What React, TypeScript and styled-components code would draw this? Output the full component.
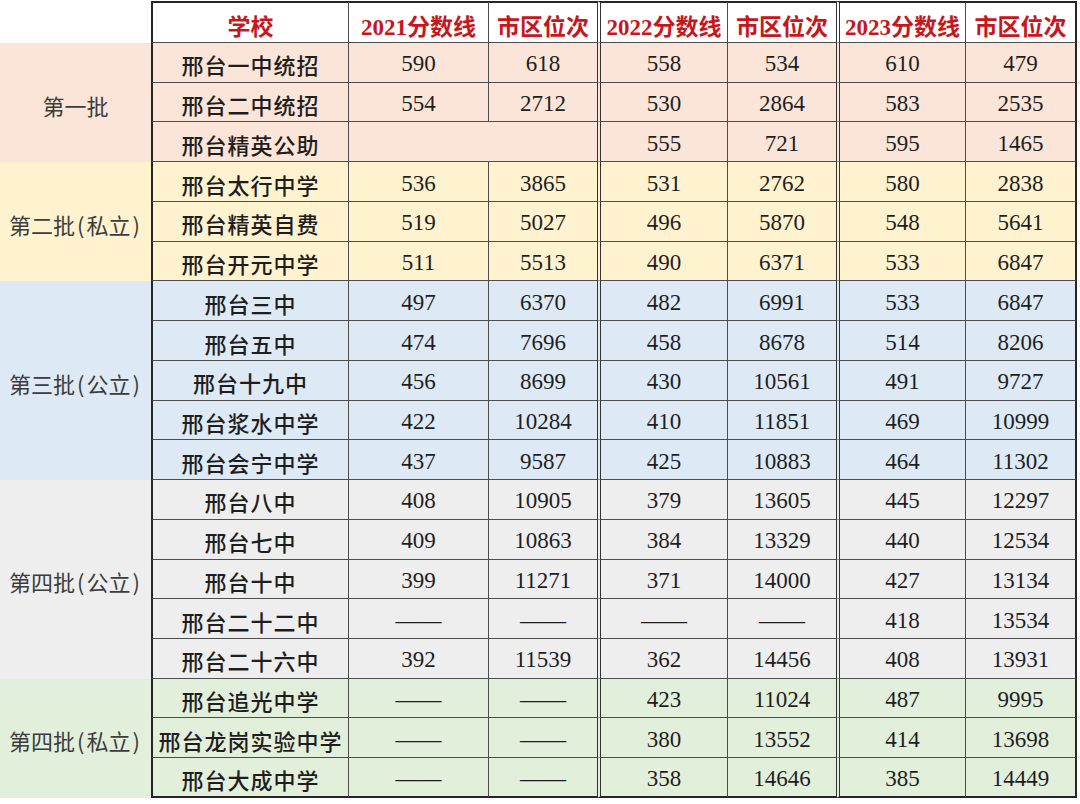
import React from "react";
import styled, { createGlobalStyle } from "styled-components";

const GlobalStyle = createGlobalStyle`
  html, body {
    margin: 0;
    padding: 0;
    background: #ffffff;
  }
  body {
    width: 1080px;
    height: 804px;
    overflow: hidden;
  }
`;

const Page = styled.div`
  width: 1080px;
  height: 804px;
  padding-top: 1px;
  box-sizing: border-box;
  background: #ffffff;
`;

const Sheet = styled.div`
  display: grid;
  grid-template-columns: 151px 198px 140px 108px 131px 108px 130px 111px;
  grid-template-rows: 42px repeat(19, 39.74px);
`;

const FRAME = "2px solid #262626";
const LINE = "1px solid #4d4d4d";
const DOUBLE = "4px double #333333";

const leftDouble = [3, 5];
const rightLine = [0, 1, 3, 5];

const Cell = styled.div<{
  $col: number;
  $span?: number;
  $bg: string;
  $lastRow?: boolean;
  $header?: boolean;
  $kind?: "name" | "num" | "head";
}>`
  grid-column: span ${(p) => p.$span ?? 1};
  display: flex;
  align-items: center;
  justify-content: center;
  box-sizing: border-box;
  padding-top: 4px;
  background: ${(p) => p.$bg};
  border-top: ${(p) => (p.$header ? FRAME : "none")};
  border-bottom: ${(p) => (p.$lastRow ? FRAME : LINE)};
  border-left: ${(p) =>
    p.$col === 0 ? FRAME : leftDouble.includes(p.$col) ? DOUBLE : "none"};
  border-right: ${(p) => {
    const end = p.$col + (p.$span ?? 1) - 1;
    if (end === 6) return FRAME;
    return rightLine.includes(end) ? LINE : "none";
  }};
  white-space: nowrap;
  font-size: ${(p) => (p.$kind === "num" ? "23px" : p.$kind === "head" ? "23px" : "22px")};
  color: ${(p) => (p.$kind === "head" ? "#c8161d" : "#1e1e1e")};
  font-weight: ${(p) =>
    p.$kind === "head" ? 700 : p.$kind === "name" ? 500 : 400};
  letter-spacing: ${(p) => (p.$kind === "name" ? "1px" : "0")};
  font-family: ${(p) =>
    p.$kind === "name"
      ? `"Noto Sans CJK SC", sans-serif`
      : `"Liberation Serif", "Noto Sans CJK SC", serif`};
`;

const Corner = styled.div`
  grid-column: 1;
  grid-row: 1;
  background: #ffffff;
`;

const Group = styled.div<{ $start: number; $span: number; $bg: string }>`
  grid-column: 1;
  grid-row: ${(p) => p.$start} / span ${(p) => p.$span};
  display: flex;
  align-items: center;
  justify-content: center;
  padding-top: 4px;
  background: ${(p) => p.$bg};
  color: #3c3c3c;
  font-family: "Noto Sans CJK SC", sans-serif;
  font-size: 22px;
  white-space: nowrap;
`;

const Paren = styled.span`
  display: inline-block;
  padding: 0 2px;
`;

const headers = ["学校", "2021分数线", "市区位次", "2022分数线", "市区位次", "2023分数线", "市区位次"];

type Row = [string, string | null, string | null, string, string, string, string];

const groups: { label: string; tag?: string; count: number; bg: string }[] = [
  { label: "第一批", count: 3, bg: "#fbe4d8" },
  { label: "第二批", tag: "私立", count: 3, bg: "#fff2cf" },
  { label: "第三批", tag: "公立", count: 5, bg: "#dde9f5" },
  { label: "第四批", tag: "公立", count: 5, bg: "#eeeeee" },
  { label: "第四批", tag: "私立", count: 3, bg: "#e2efda" },
];

const D = "——";

const rows: Row[] = [
  ["邢台一中统招", "590", "618", "558", "534", "610", "479"],
  ["邢台二中统招", "554", "2712", "530", "2864", "583", "2535"],
  ["邢台精英公助", null, null, "555", "721", "595", "1465"],
  ["邢台太行中学", "536", "3865", "531", "2762", "580", "2838"],
  ["邢台精英自费", "519", "5027", "496", "5870", "548", "5641"],
  ["邢台开元中学", "511", "5513", "490", "6371", "533", "6847"],
  ["邢台三中", "497", "6370", "482", "6991", "533", "6847"],
  ["邢台五中", "474", "7696", "458", "8678", "514", "8206"],
  ["邢台十九中", "456", "8699", "430", "10561", "491", "9727"],
  ["邢台浆水中学", "422", "10284", "410", "11851", "469", "10999"],
  ["邢台会宁中学", "437", "9587", "425", "10883", "464", "11302"],
  ["邢台八中", "408", "10905", "379", "13605", "445", "12297"],
  ["邢台七中", "409", "10863", "384", "13329", "440", "12534"],
  ["邢台十中", "399", "11271", "371", "14000", "427", "13134"],
  ["邢台二十二中", D, D, D, D, "418", "13534"],
  ["邢台二十六中", "392", "11539", "362", "14456", "408", "13931"],
  ["邢台追光中学", D, D, "423", "11024", "487", "9995"],
  ["邢台龙岗实验中学", D, D, "380", "13552", "414", "13698"],
  ["邢台大成中学", D, D, "358", "14646", "385", "14449"],
];

export default function App() {
  const rowColors: string[] = [];
  groups.forEach((g) => {
    for (let i = 0; i < g.count; i++) rowColors.push(g.bg);
  });

  let start = 2;
  const groupCells = groups.map((g, i) => {
    const el = (
      <Group key={"g" + i} $start={start} $span={g.count} $bg={g.bg}>
        {g.label}
        {g.tag && (
          <>
            <Paren>(</Paren>
            {g.tag}
            <Paren>)</Paren>
          </>
        )}
      </Group>
    );
    start += g.count;
    return el;
  });

  return (
    <Page>
      <GlobalStyle />
      <Sheet>
        <Corner />
        {headers.map((h, c) => (
          <Cell key={"h" + c} $col={c} $bg="#ffffff" $header $kind="head">
            {h}
          </Cell>
        ))}
        {groupCells}
        {rows.map((r, ri) => {
          const bg = rowColors[ri];
          const last = ri === rows.length - 1;
          const cells: React.ReactNode[] = [];
          r.forEach((v, c) => {
            if (c === 2 && r[1] === null) return;
            if (c === 1 && v === null) {
              cells.push(
                <Cell key={ri + "-" + c} $col={1} $span={2} $bg={bg} $lastRow={last} />
              );
              return;
            }
            cells.push(
              <Cell
                key={ri + "-" + c}
                $col={c}
                $bg={bg}
                $lastRow={last}
                $kind={c === 0 ? "name" : "num"}
              >
                {v}
              </Cell>
            );
          });
          return <React.Fragment key={"r" + ri}>{cells}</React.Fragment>;
        })}
      </Sheet>
    </Page>
  );
}
